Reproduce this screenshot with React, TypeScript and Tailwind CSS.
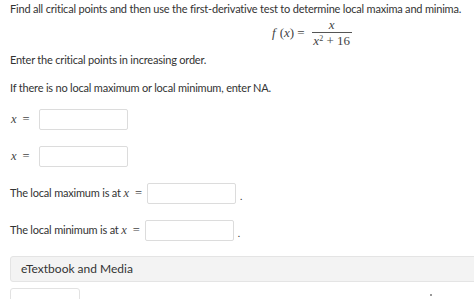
import React from "react";

const serif = { fontFamily: '"Liberation Serif", "DejaVu Serif", serif' };

function AnswerBox() {
  return <div className="h-[21px] w-[89px] rounded-[2px] border border-[#dcdcdc] bg-white" />;
}

function XEquals() {
  return (
    <span className="tracking-normal text-[12.5px] text-[#444]" style={serif}>
      <i>x</i>
      <span className="ml-[6px]">=</span>
    </span>
  );
}

export default function App() {
  return (
    <div className="h-[299px] w-[474px] overflow-hidden bg-white font-['Lato',sans-serif] text-[11px] tracking-[-0.2px] text-[#333]">
      <div className="pl-[10px]">
        {/* Question */}
        <p className="whitespace-nowrap pt-[2px] leading-[14px]">
          Find all critical points and then use the first-derivative test to determine local maxima and minima.
        </p>

        {/* Formula */}
        <div className="mt-px ml-[262px] flex items-center tracking-normal text-[13px] text-[#444]" style={serif}>
          <span className="mr-[7px]">
            <i>f</i>
            <span className="ml-[4px]">(</span>
            <i>x</i>) =
          </span>
          <span className="flex flex-col items-center">
            <span className="px-[2px] leading-[15px]">
              <i>x</i>
            </span>
            <span className="h-px w-[40px] bg-[#555]" />
            <span className="leading-[16px]">
              <i>x</i>
              <sup className="text-[8px]">2</sup> + 16
            </span>
          </span>
        </div>

        <p className="mt-[4px] leading-[14px]">Enter the critical points in increasing order.</p>
        <p className="mt-[14px] leading-[14px]">If there is no local maximum or local minimum, enter NA.</p>

        {/* Critical points */}
        <div className="mt-[14px] flex items-center">
          <span className="w-[29px] pl-px">
            <XEquals />
          </span>
          <AnswerBox />
        </div>
        <div className="mt-[16px] flex items-center">
          <span className="w-[29px] pl-px">
            <XEquals />
          </span>
          <AnswerBox />
        </div>

        {/* Extrema */}
        <div className="mt-[16px] flex items-center">
          <span className="mr-[5px] whitespace-nowrap">
            The local maximum is at <XEquals />
          </span>
          <AnswerBox />
          <span className="ml-[4px] mt-[6px] text-[10px]">.</span>
        </div>
        <div className="mt-[16px] flex items-center">
          <span className="mr-[5px] whitespace-nowrap">
            The local minimum is at <XEquals />
          </span>
          <AnswerBox />
          <span className="ml-[4px] mt-[6px] text-[10px]">.</span>
        </div>

        {/* eTextbook */}
        <div className="mt-[15px] -mr-[4px] flex h-[26px] items-center rounded-l-[3px] border border-[#e4e4e4] bg-[#f3f3f3] pl-[10px] text-[12px] tracking-normal text-[#333]">
          eTextbook and Media
        </div>

        <div className="mt-[6px] flex items-start justify-between pr-[42px]">
          <div className="h-[20px] w-[70px] rounded-t-[3px] border border-[#e2e2e2] bg-white" />
          <span className="mt-[6px] h-[2px] w-[2px] bg-[#999]" />
        </div>
      </div>
    </div>
  );
}
